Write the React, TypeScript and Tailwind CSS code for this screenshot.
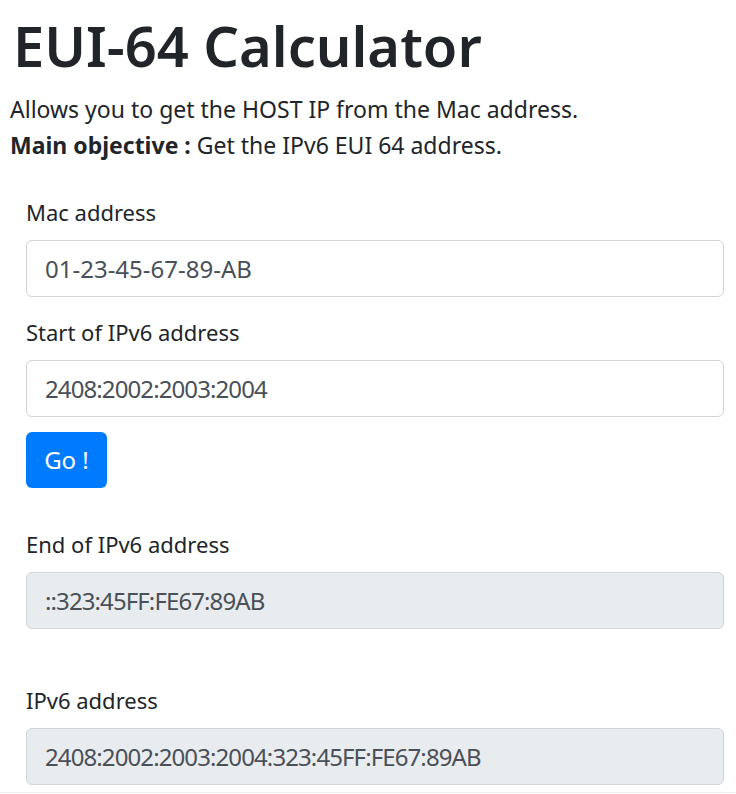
const inputBase =
  "block w-full h-[57px] px-[18px] text-[24px] text-[#495057] border border-[#ced4da] rounded-[6px] outline-none";

export default function App() {
  const font = { fontFamily: '"Noto Sans", "Open Sans", sans-serif' };
  return (
    <div className="min-h-[794px] bg-white text-[#212529]" style={font}>
      <div className="px-[10px] pt-[11px]">
        <h1 className="pl-[3px] text-[56px] leading-[68px] font-semibold mb-[12px]">EUI-64 Calculator</h1>
        <p className="text-[23px] leading-[36px]">Allows you to get the HOST IP from the Mac address.</p>
        <p className="text-[23px] leading-[36px]">
          <b className="font-bold">Main objective :</b> Get the IPv6 EUI 64 address.
        </p>
      </div>
      <div className="pl-[26px] pr-[12px] pt-[31px]">
        <label className="block text-[22px] leading-[36px] mb-[10px]">Mac address</label>
        <input readOnly value="01-23-45-67-89-AB" className={`${inputBase} bg-white`} />
        <label className="block text-[22px] leading-[36px] mt-[17px] mb-[10px]">Start of IPv6 address</label>
        <input readOnly value="2408:2002:2003:2004" className={`${inputBase} bg-white tracking-[-0.9px]`} />
        <button className="block mt-[15px] h-[56px] w-[81px] bg-[#007bff] text-white text-[24px] rounded-[6px]">Go !</button>
        <label className="block text-[22px] leading-[36px] mt-[38px] mb-[10px]">End of IPv6 address</label>
        <input readOnly value="::323:45FF:FE67:89AB" className={`${inputBase} bg-[#e9ecef] tracking-[-0.9px]`} />
        <label className="block text-[22px] leading-[36px] mt-[53px] mb-[10px]">IPv6 address</label>
        <input
          readOnly
          value="2408:2002:2003:2004:323:45FF:FE67:89AB"
          className={`${inputBase} bg-[#e9ecef] tracking-[-0.9px]`}
        />
      </div>
      <div className="mt-[7px] border-t border-[#eeeeee]"></div>
    </div>
  );
}
